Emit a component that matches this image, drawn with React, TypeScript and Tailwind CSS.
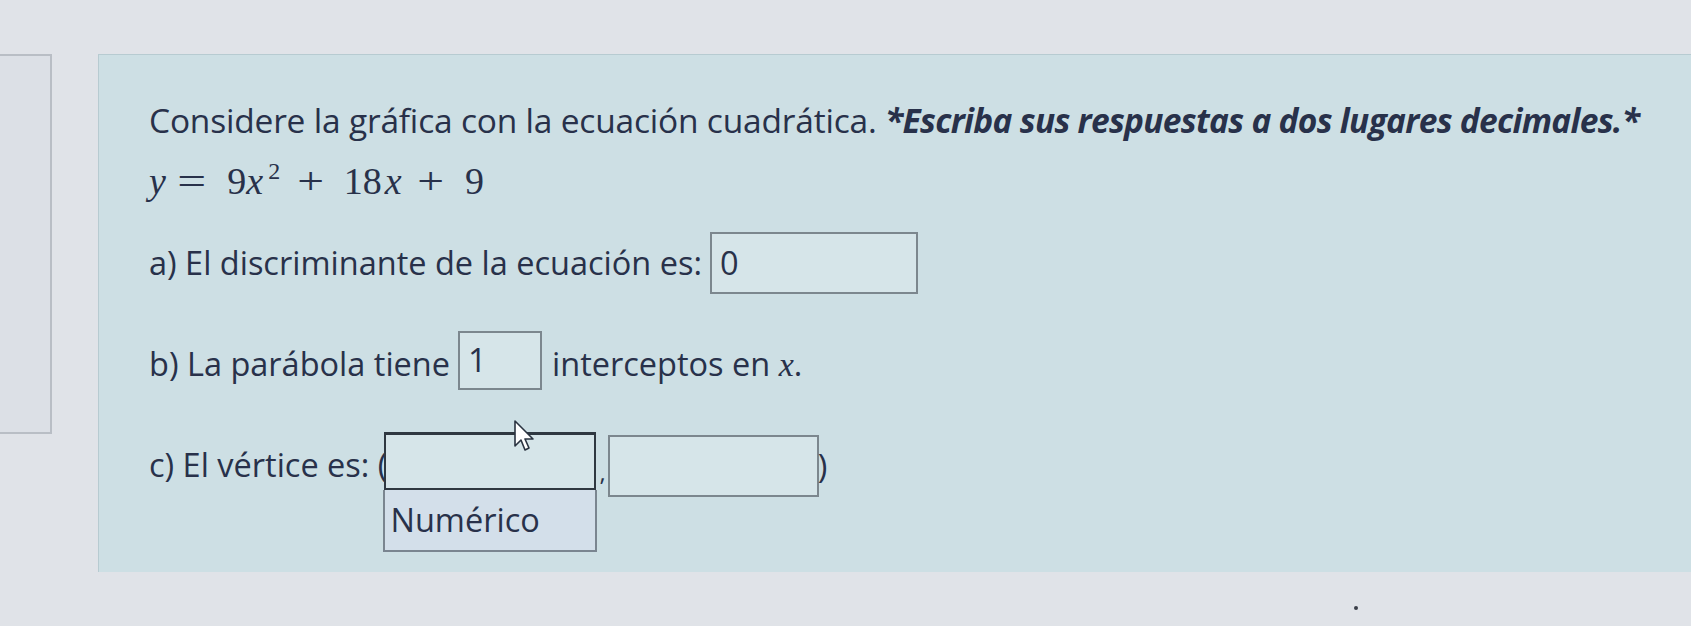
import React from "react"

function Cursor() {
  return (
    <svg
      className="absolute left-[514px] top-[420px]"
      width="22"
      height="34"
      viewBox="0 0 22 34"
    >
      <path
        d="M1 1 L1 26 L7 20 L11 30 L15 28 L11 19 L19 19 Z"
        fill="#ffffff"
        stroke="#2a3340"
        strokeWidth="1.6"
        strokeLinejoin="round"
      />
    </svg>
  )
}

function Box({ value, className }: { value?: string; className: string }) {
  return (
    <div
      className={`flex items-center px-[8px] bg-[#d6e5e9] border-2 border-[#7c878e] ${className}`}
    >
      {value}
    </div>
  )
}

export default function App() {
  return (
    <div className="relative w-[1691px] h-[626px] overflow-hidden bg-[#e0e3e8] text-[#28314a] font-['Open_Sans',sans-serif]">
      <div className="flex items-start gap-[46px] pt-[54px]">
        {/* left side panel */}
        <div className="w-[52px] h-[380px] bg-[#dce0e6] border-r-2 border-t-2 border-b-2 border-[#b9bec5]" />

        {/* question panel */}
        <div className="flex-1 h-[518px] bg-[#cddfe4] border-t border-l border-[#b7cbd1] pl-[50px] pt-[43px]">
          <p className="text-[33.5px] leading-[44px] whitespace-nowrap tracking-[-0.2px]">
            Considere la gráfica con la ecuación cuadrática.{" "}
            <span className="font-bold italic tracking-[-0.7px]">
              *Escriba sus respuestas a dos lugares decimales.*
            </span>
          </p>

          <p className="mt-[15px] h-[48px] leading-[48px] text-[38px] font-['Liberation_Serif',serif] whitespace-nowrap">
            <i>y</i>
            <span className="inline-block scale-x-[1.35] ml-[15px] mr-[25px]">=</span>9<i>x</i>
            <span className="relative -top-[15px] ml-[5px] text-[24px]">2</span>
            <span className="inline-block scale-x-[1.25] ml-[20px] mr-[22px]">+</span>18<i className="ml-[3px]">x</i>
            <span className="inline-block scale-x-[1.25] ml-[18px] mr-[24px]">+</span>9
          </p>

          <div className="mt-[27px] flex items-center h-[62px] text-[32.5px] whitespace-nowrap">
            <span>a) El discriminante de la ecuación es:</span>
            <Box value="0" className="ml-[8px] w-[208px] h-[62px]" />
          </div>

          <div className="mt-[37px] flex items-center h-[59px] text-[32.5px] whitespace-nowrap">
            <span className="relative top-[4px]">b) La parábola tiene</span>
            <Box value="1" className="ml-[8px] w-[84px] h-[59px]" />
            <span className="ml-[10px] relative top-[4px]">
              interceptos en <i className="font-['Liberation_Serif',serif] text-[34px]">x</i>.
            </span>
          </div>

          <div className="mt-[42px] flex items-start text-[32.5px] whitespace-nowrap">
            <span className="h-[56px] leading-[66px]">c) El vértice es: (</span>
            <div className="flex flex-col -ml-[3px]">
              <div className="w-[212px] h-[58px] bg-[#d6e5e9] border-2 border-t-[3px] border-[#2f3841]" />
              <div className="w-[214px] h-[62px] -ml-[1px] flex items-center px-[5px] bg-[#d3dfea] border-2 border-t-0 border-[#7a8590]">
                Numérico
              </div>
            </div>
            <span className="h-[56px] leading-[80px] mx-[2px] text-[24px]">,</span>
            <Box className="mt-[3px] w-[211px] h-[62px]" />
            <span className="h-[62px] leading-[68px] -ml-[1px]">)</span>
          </div>
        </div>
      </div>

      <Cursor />
      <span className="absolute left-[1354px] top-[606px] w-[4px] h-[4px] rounded-full bg-[#3a3f48]" />
    </div>
  )
}
